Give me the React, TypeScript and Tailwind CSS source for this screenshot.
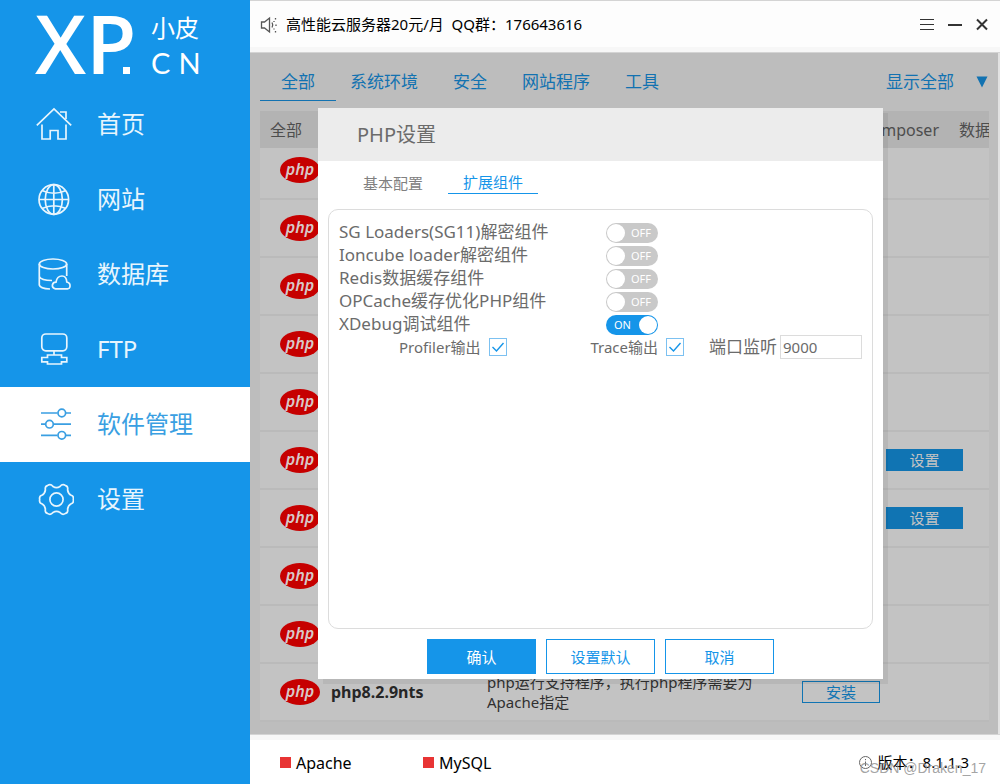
import { useState } from 'react'
import type { ReactNode } from 'react'
import clsx from 'clsx'

const NAV: { id: string; label: string; icon: ReactNode }[] = [
  {
    id: 'home', label: '首页',
    icon: <>
      <path d="M0.8 20.3 L18 4 L35.2 20.3" />
      <path d="M24 7 H30 V14" />
      <path d="M6 19.5 V34 H14.2 V25.5 H22 V34 H30 V19.5" />
    </>,
  },
  {
    id: 'site', label: '网站',
    icon: <>
      <circle cx="17.8" cy="19.5" r="14.8" />
      <ellipse cx="17.8" cy="19.5" rx="8.6" ry="14.8" />
      <path d="M17.8 4.5 V34.5 M3 19.5 H33 M6 10.5 Q18 16 30 10.5 M6 28.5 Q18 23 30 28.5" />
    </>,
  },
  {
    id: 'db', label: '数据库',
    icon: <>
      <ellipse cx="17" cy="9" rx="13.7" ry="5" />
      <path d="M3.3 9 V30 Q4 33.5 14 34 M30.7 9 V21 M3.3 21.5 Q5 25.5 16 25.5" />
      <path d="M19.5 33.8 Q16 33 16.4 30 Q17 27.2 20 27.2 Q21 21 26 21 Q30.5 21 30.8 27 Q34.5 27.8 34 31.5 Q33.7 33.8 31.5 33.8 Z" />
    </>,
  },
  {
    id: 'ftp', label: 'FTP',
    icon: <>
      <rect x="5.8" y="4" width="25" height="16.8" rx="4" />
      <path d="M18 20.8 V25 M11.5 25 H25.5 V27.5 H30.8 V31.8 H25.5 V34 H11.5 V31.8 H5.8 V27.5 H11.5 Z" />
    </>,
  },
  {
    id: 'soft', label: '软件管理',
    icon: <>
      <path d="M5 8 H21.5 M30 8 H35 M5 19.2 H9.2 M17.8 19.2 H35 M5 30.3 H21.5 M30 30.3 H35" />
      <circle cx="25.8" cy="8" r="3.8" />
      <circle cx="13.5" cy="19.2" r="3.8" />
      <circle cx="25.8" cy="30.3" r="3.8" />
    </>,
  },
  {
    id: 'settings', label: '设置',
    icon: <>
      <path d="M17 6.5 Q20.5 8.6 24 6.5 Q26.4 3.5 29.6 5.6 Q32.3 6.4 31.6 10 Q32.2 13.8 35.2 15.2 Q38 16 37.3 19.5 Q38 23 35.2 23.8 Q32.2 25.2 31.6 29 Q32.3 32.6 29.6 33.4 Q26.4 35.5 24 32.5 Q20.5 30.4 17 32.5 Q14.6 35.5 11.4 33.4 Q8.7 32.6 9.4 29 Q8.8 25.2 5.8 23.8 Q3 23 3.7 19.5 Q3 16 5.8 15.2 Q8.8 13.8 9.4 10 Q8.7 6.4 11.4 5.6 Q14.6 3.5 17 6.5 Z" />
      <circle cx="20.5" cy="19.5" r="6.6" />
    </>,
  },
]

const CATEGORIES = ['全部', '系统环境', '安全', '网站程序', '工具']

interface Software {
  name?: string
  desc?: string
  action?: 'config' | 'install'
}

const SOFTWARE: Software[] = [
  {}, {}, {}, {}, {},
  { action: 'config' },
  { action: 'config' },
  {}, {},
  { name: 'php8.2.9nts', desc: 'php运行支持程序，执行php程序需要为Apache指定', action: 'install' },
]

const EXTENSIONS = [
  { id: 'sg11', label: 'SG Loaders(SG11)解密组件', on: false },
  { id: 'ioncube', label: 'Ioncube loader解密组件', on: false },
  { id: 'redis', label: 'Redis数据缓存组件', on: false },
  { id: 'opcache', label: 'OPCache缓存优化PHP组件', on: false },
  { id: 'xdebug', label: 'XDebug调试组件', on: true },
]

function Sidebar() {
  return (
    <aside className="w-[250px] shrink-0 bg-[#1595e9] text-white">
      <div className="flex h-[87px] items-start pl-[35px]">
        <div className="relative w-[116px] font-['Open_Sans'] text-[82px] leading-[84px] font-semibold">
          XP
          <span className="absolute top-[67px] left-[88px] size-[7px] bg-white" />
        </div>
        <div className="flex flex-col pt-[11px]">
          <span className="text-[24px] leading-[34px]">小皮</span>
          <span className="flex gap-2 font-[Lato] text-[29px] leading-[35px]"><span>C</span><span>N</span></span>
        </div>
      </div>
      <nav>
        {NAV.map(item => (
          <a
            key={item.id}
            href={`#${item.id}`}
            className={clsx(
              'flex h-[75px] items-center gap-[23px] pb-px pl-9 text-[24px]',
              item.id === 'soft' ? 'bg-white text-[#3a9fe2]' : 'text-[#e8f5fd]',
            )}
          >
            <svg width="38" height="38" viewBox="0 0 38 38" fill="none" stroke="currentColor" strokeWidth="1.7">
              {item.icon}
            </svg>
            {item.label}
          </a>
        ))}
      </nav>
    </aside>
  )
}

function TitleBar() {
  return (
    <header className="flex h-[53px] shrink-0 items-center border-t border-b border-[#d4d4d4] bg-[#fdfdfd] pr-3 pb-1 pl-[10px] text-[15px] text-black shadow-[inset_0_-5px_0_#f7f7f7]">
      <svg width="18" height="18" viewBox="0 0 18 18" fill="none" stroke="#555" strokeWidth="1.3">
        <path d="M1.5 6 H4.5 L9.5 2 V16 L4.5 12 H1.5 Z" />
        <path d="M12 6.5 Q13.5 9 12 11.5" />
        <path d="M15.5 2 V3.5 M14 5 V6 M16 8.5 V10 M14 12.5 V13.5 M15.5 15 V16.5" />
      </svg>
      <p className="pl-2 whitespace-pre">高性能云服务器20元/月  QQ群：176643616</p>
      <div className="ml-auto flex items-center gap-[14px]">
        <button aria-label="菜单">
          <svg width="14" height="14" viewBox="0 0 14 14" stroke="#333"><path d="M0 1.5 H14 M0 6.5 H14 M0 11.5 H14" /></svg>
        </button>
        <button aria-label="最小化">
          <svg width="14" height="14" viewBox="0 0 14 14" stroke="#333" strokeWidth="2"><path d="M0 7 H14" /></svg>
        </button>
        <button aria-label="关闭">
          <svg width="12" height="14" viewBox="0 0 12 14" stroke="#333" strokeWidth="2"><path d="M1 1.5 L11 11.5 M11 1.5 L1 11.5" /></svg>
        </button>
      </div>
    </header>
  )
}

function SoftwareRow({ item }: { item: Software }) {
  return (
    <li className="flex h-[58px] shrink-0 items-center border-b-2 border-[#bababa] bg-[#c3c3c3] pl-5">
      <span className="flex h-[26px] w-10 shrink-0 items-center justify-center rounded-[50%] bg-[#c60000] pb-[3px] text-[16px] leading-[22px] font-semibold text-[#d8c8c8] italic">
        php
      </span>
      <span className="w-[167px] shrink-0 pl-[11px] text-[16px] font-bold text-[#262626]">{item.name}</span>
      <span className="w-[280px] shrink-0 text-[15px] leading-5 text-[#303030]">{item.desc}</span>
      <span className="flex flex-1 gap-[6px] pl-[35px] text-[15px] leading-5">
        {item.action === 'install' && (
          <button className="h-[22px] w-[78px] border border-[#1074b3] text-[#1074b3]">安装</button>
        )}
        {item.action === 'config' && (
          <button className="ml-[84px] h-[22px] w-[77px] bg-[#1074b3] text-[#c3c3c3]">设置</button>
        )}
      </span>
    </li>
  )
}

function SoftwarePanel() {
  return (
    <section className="mr-[2px] flex min-h-0 flex-1 flex-col bg-[#bdbdbd] pr-[9px] pb-3 pl-[10px]">
      <div className="flex h-12 items-stretch pr-px text-[17px] text-[#1272b1]">
        {CATEGORIES.map((c, i) => (
          <button
            key={c}
            className={clsx('pt-[10px]', i === 0 ? 'mr-[14px] w-[76px] border-b border-[#1272b1]' : 'mr-[35px]')}
          >
            {c}
          </button>
        ))}
        <label className="ml-auto flex items-center gap-[22px] pt-[10px]">
          <select className="appearance-none outline-none" aria-label="显示">
            <option>显示全部</option>
          </select>
          <svg width="12" height="12" viewBox="0 0 12 12" fill="#1272b1"><path d="M0.5 0.5 H11.5 L6 11.5 Z" /></svg>
        </label>
      </div>
      <div className="mt-[10px] flex h-[37px] shrink-0 items-center overflow-hidden bg-[#b3b3b3] pl-[10px] text-[16px] whitespace-nowrap text-[#4d4d4d]">
        <button>全部</button>
        <button className="mr-5 ml-auto">Composer</button>
        <button className="w-[30px] overflow-hidden text-left">数据</button>
      </div>
      <ul className="flex min-h-0 flex-1 flex-col justify-end overflow-hidden">
        {SOFTWARE.map((item, i) => <SoftwareRow key={i} item={item} />)}
      </ul>
    </section>
  )
}

function Toggle({ id, on, onToggle }: { id: string; on: boolean; onToggle: () => void }) {
  return (
    <button
      role="switch"
      aria-checked={on}
      aria-labelledby={id}
      onClick={onToggle}
      className={clsx(
        'flex h-5 w-[52px] items-center justify-between rounded-full px-px text-[11px] leading-5 text-white',
        on ? 'flex-row-reverse bg-[#1595e9]' : 'bg-[#c9c9c9]',
      )}
    >
      <span className="size-[18px] rounded-full bg-white" />
      <span className={on ? 'pl-[7px]' : 'pr-[6px]'}>{on ? 'ON' : 'OFF'}</span>
    </button>
  )
}

function CheckField({ label }: { label: string }) {
  const [checked, setChecked] = useState(true)
  return (
    <label className="flex items-center gap-2 text-[15px]">
      {label}
      <span className="relative size-[18px]">
        <input
          type="checkbox"
          checked={checked}
          onChange={e => setChecked(e.target.checked)}
          className="block size-[18px] appearance-none border border-[#7cc1f1] bg-white"
        />
        {checked && (
          <svg className="pointer-events-none absolute inset-0" width="18" height="18" viewBox="0 0 18 18" fill="none" stroke="#1595e9" strokeWidth="1.4">
            <path d="M3.5 9 L7.5 13 L14.5 5" />
          </svg>
        )}
      </span>
    </label>
  )
}

function PhpDialog() {
  const [exts, setExts] = useState(EXTENSIONS)
  const [port, setPort] = useState('9000')

  const toggle = (id: string) => setExts(list => list.map(e => (e.id === id ? { ...e, on: !e.on } : e)))

  return (
    <div
      role="dialog"
      aria-labelledby="dialog-title"
      className="absolute top-[108px] left-[68px] flex h-[571px] w-[565px] flex-col bg-white text-[#6b6b6b] shadow-[5px_5px_0_rgba(0,0,0,0.06)]"
    >
      <h2 id="dialog-title" className="h-[53px] bg-[#ececec] pl-[39px] text-[20px] leading-[54px]">PHP设置</h2>
      <div className="flex pl-[30px] text-[15px]">
        <button className="mt-[7px] h-[26px] w-[90px] leading-[30px] text-[#808080]">基本配置</button>
        <button className="mt-[7px] ml-[10px] h-[26px] w-[90px] border-b border-[#1595e9] leading-[28px] text-[#1595e9]">扩展组件</button>
      </div>
      <div className="mx-[10px] mt-[15px] flex-1 rounded-[10px] border border-[#dcdcdc] pt-[13px] pl-[10px]">
        <ul className="flex flex-col gap-[3px] text-[17px] leading-[18px]">
          {exts.map(e => (
            <li key={e.id} className="flex h-5 items-start">
              <span id={e.id} className="w-[267px]">{e.label}</span>
              <Toggle id={e.id} on={e.on} onToggle={() => toggle(e.id)} />
            </li>
          ))}
        </ul>
        <div className="flex h-6 items-center justify-between pr-[10px] pl-[60px]">
          <CheckField label="Profiler输出" />
          <div className="flex items-center gap-[25px]">
            <CheckField label="Trace输出" />
            <label className="flex items-center gap-[3px] text-[17px]">
              端口监听
              <input
                value={port}
                onChange={e => setPort(e.target.value)}
                className="h-6 w-[82px] border border-[#dcdcdc] px-[2px] text-[15px] outline-none"
              />
            </label>
          </div>
        </div>
      </div>
      <div className="mt-[10px] mb-[5px] flex justify-center gap-[10px] text-[15px]">
        <button className="h-[35px] w-[109px] bg-[#1595e9] pt-[2px] text-white">确认</button>
        <button className="h-[35px] w-[109px] border border-[#1595e9] pt-[2px] text-[#1595e9]">设置默认</button>
        <button className="h-[35px] w-[109px] border border-[#1595e9] pt-[2px] text-[#1595e9]">取消</button>
      </div>
    </div>
  )
}

function StatusBar() {
  return (
    <footer className="relative flex h-[50px] shrink-0 items-center border-t border-[#d4d4d4] bg-white pt-[6px] pr-[31px] pl-[30px] text-[16px] text-black shadow-[inset_0_5px_0_#f7f7f7]">
      <span className="flex w-[143px] items-center gap-[5px]"><i className="size-[11px] bg-[#e83434]" />Apache</span>
      <span className="flex items-center gap-[5px]"><i className="size-[11px] bg-[#e83434]" />MySQL</span>
      <span className="ml-auto flex items-center gap-[6px] text-[15px]">
        <svg width="13" height="13" viewBox="0 0 13 13" fill="none" stroke="#666">
          <circle cx="6.5" cy="6.5" r="6" />
          <path d="M6.5 5.5 V10 M6.5 3 V4.2" />
        </svg>
        版本：8.1.1.3
      </span>
      <span className="absolute right-[14px] bottom-1 font-['Liberation_Sans',sans-serif] text-[14px] leading-6 text-[#8c8c8c]/80">CSDN @Draken_17</span>
    </footer>
  )
}

export default function App() {
  return (
    <div className="flex h-screen bg-white font-['Noto_Sans','Noto_Sans_CJK_SC',sans-serif]">
      <Sidebar />
      <main className="relative flex min-w-0 flex-1 flex-col bg-[#e2e2e2]">
        <TitleBar />
        <SoftwarePanel />
        <StatusBar />
        <PhpDialog />
      </main>
    </div>
  )
}
